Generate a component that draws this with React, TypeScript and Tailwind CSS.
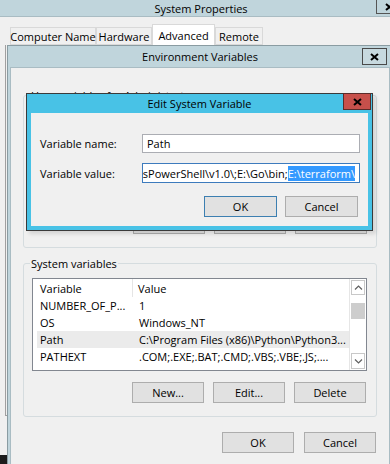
import type { ReactNode } from "react";

type EnvRow = { name: string; value: string; active?: boolean };

const SYSTEM_ROWS: EnvRow[] = [
  { name: "NUMBER_OF_P...", value: "1" },
  { name: "OS", value: "Windows_NT" },
  { name: "Path", value: "C:\\Program Files (x86)\\Python\\Python3...", active: true },
  { name: "PATHEXT", value: ".COM;.EXE;.BAT;.CMD;.VBS;.VBE;.JS;...." },
];

const TABS = [
  { label: "Computer Name", width: "w-[86px]" },
  { label: "Hardware", width: "w-[56px]" },
  { label: "Advanced", width: "w-[63px]", selected: true },
  { label: "Remote", width: "w-[48px]" },
];

function CloseGlyph() {
  return (
    <svg width="9" height="8" viewBox="0 0 9 8" className="text-black">
      <path d="M1 1l7 6M8 1L1 7" stroke="currentColor" strokeWidth="2" fill="none" />
    </svg>
  );
}

function Chevron({ down = false }: { down?: boolean }) {
  return (
    <svg width="9" height="6" viewBox="0 0 9 6">
      <path d={down ? "M1 1.5l3.5 3.5L8 1.5" : "M1 4.5L4.5 1 8 4.5"} stroke="#606060" strokeWidth="1.2" fill="none" />
    </svg>
  );
}

function WinButton({ children, isDefault = false, wide = false }: { children: ReactNode; isDefault?: boolean; wide?: boolean }) {
  return (
    <div
      className={`flex h-[21px] items-center justify-center border bg-[#e1e1e1] ${wide ? "w-[73px]" : "w-[72px]"} ${
        isDefault ? "border-[#3c7fb1]" : "border-[#adadad]"
      }`}
    >
      {children}
    </div>
  );
}

function ListView({ rows }: { rows: EnvRow[] }) {
  return (
    <div className="flex h-[93px] border border-[#828790] bg-white">
      <div className="min-w-0 flex-1 overflow-hidden">
        <div className="flex h-[18px] items-center">
          <div className="flex h-full w-[100px] items-center border-r border-[#e5e5e5] pl-[7px]">Variable</div>
          <div className="pl-[5px]">Value</div>
        </div>
        {rows.map((r) => (
          <div key={r.name} className={`ml-[4px] flex h-[17px] items-center ${r.active ? "bg-[#ebebeb]" : ""}`}>
            <div className="w-[96px] pl-[3px]">{r.name}</div>
            <div className="pl-[6px]">{r.value}</div>
          </div>
        ))}
      </div>
      <div className="flex w-[17px] flex-col border-l border-[#e6e6e6] bg-white p-[1px]">
        <div className="flex h-[15px] shrink-0 items-center justify-center border border-[#c8c8c8]">
          <Chevron />
        </div>
        <div className="mt-[8px] h-[16px] shrink-0 bg-[#cdcdcd]" />
        <div className="flex-1" />
        <div className="flex h-[16px] shrink-0 items-center justify-center border border-[#c8c8c8]">
          <Chevron down />
        </div>
      </div>
    </div>
  );
}

export default function App() {
  return (
    <div className="relative h-[464px] w-[390px] overflow-hidden whitespace-nowrap bg-[#f0f0f0] font-['Open_Sans',sans-serif] text-[11px] leading-[15px] text-black">
      {/* System Properties (inactive, behind) */}
      <div className="relative flex h-[17px] items-center justify-center border-b border-[#a9bcc3] bg-[#c0d5dc]">
        <span className="pl-[12px]">System Properties</span>
        <div className="absolute right-[-13px] top-[-1px] flex h-[15px] w-[27px] items-center justify-center border border-[#555] bg-[#c0d5dc]">
          <CloseGlyph />
        </div>
      </div>
      <div className="flex h-[28px] items-end pl-[10px]">
        {TABS.map((t) =>
          t.selected ? (
            <div key={t.label} className={`flex h-[21px] ${t.width} items-start justify-center border border-b-0 border-[#d9d9d9] bg-white pt-[3px]`}>
              {t.label}
            </div>
          ) : (
            <div key={t.label} className={`flex h-[18px] ${t.width} items-center justify-center border border-[#d9d9d9] bg-[#f0f0f0]`}>
              {t.label}
            </div>
          )
        )}
      </div>
      <div className="ml-[5px] h-[371px] w-[10px] border-b border-l border-[#a0a0a0]" />

      {/* Environment Variables */}
      <div className="absolute left-[7px] top-[45px] flex h-[440px] w-[386px] flex-col border border-[#8a9ca2] bg-[#c0d5dc] px-[2px]">
        <div className="relative flex h-[21px] shrink-0 items-center justify-center">
          <span>Environment Variables</span>
          <div className="absolute right-[3px] top-[2px] flex h-[17px] w-[25px] items-center justify-center border border-[#4a4a4a] bg-[#c7d9df]">
            <CloseGlyph />
          </div>
        </div>
        <div className="flex flex-1 flex-col border border-[#a9bcc3] bg-[#f0f0f0] px-[12px]">
          <fieldset className="mt-[20px] rounded-[3px] border border-[#d5dcdf] px-[8px] pb-[13px]">
            <legend className="ml-[-2px] px-[1px]">User variables for Administrator</legend>
            <div className="mt-[6px] h-[93px] border border-[#828790] bg-white" />
            <div className="mt-[11px] flex justify-end gap-[9px] pr-[1px]">
              <WinButton>New...</WinButton>
              <WinButton>Edit...</WinButton>
              <WinButton>Delete</WinButton>
            </div>
          </fieldset>
          <fieldset className="mt-[8px] rounded-[3px] border border-[#d5dcdf] pl-[8px] pr-[9px] pb-[13px]">
            <legend className="ml-[-2px] px-[1px]">System variables</legend>
            <div className="mt-[7px]">
              <ListView rows={SYSTEM_ROWS} />
            </div>
            <div className="mt-[11px] flex justify-end gap-[9px] pr-[1px]">
              <WinButton>New...</WinButton>
              <WinButton>Edit...</WinButton>
              <WinButton>Delete</WinButton>
            </div>
          </fieldset>
          <div className="mt-[15px] flex justify-end gap-[10px] pr-[1px]">
            <WinButton>OK</WinButton>
            <WinButton>Cancel</WinButton>
          </div>
        </div>
      </div>

      {/* Edit System Variable (active dialog) */}
      <div className="absolute left-[26px] top-[93px] flex h-[138px] w-[347px] flex-col border border-[#3a3a3a] bg-[#48c2e6] px-[4px] pb-[4px] shadow-[3px_3px_4px_rgba(0,0,0,0.12)]">
        <div className="relative flex h-[19px] shrink-0 items-center justify-center">
          <span>Edit System Variable</span>
          <div className="absolute right-[-3px] top-[-1px] flex h-[17px] w-[28px] items-center justify-center border border-[#5a2c2a] bg-[#c7504b]">
            <CloseGlyph />
          </div>
        </div>
        <div className="flex flex-1 flex-col bg-[#f0f0f0] pl-[9px] pr-[8px] pt-[21px]">
          <div className="flex h-[19px] items-center">
            <div className="w-[102px]">Variable name:</div>
            <div className="flex h-full flex-1 items-center border border-[#abadb3] bg-white pl-[4px]">Path</div>
          </div>
          <div className="mt-[10px] flex h-[20px] items-center">
            <div className="w-[102px]">Variable value:</div>
            <div className="flex h-full min-w-0 flex-1 items-center justify-end overflow-hidden border border-[#3d7bbd] bg-white pr-[4px]">
              <span>sPowerShell\v1.0\;E:\Go\bin;</span>
              <span className="bg-[#3399ff] text-white">E:\terraform\</span>
            </div>
          </div>
          <div className="mt-[13px] flex justify-end gap-[8px] pr-[2px]">
            <WinButton isDefault wide>
              OK
            </WinButton>
            <WinButton wide>Cancel</WinButton>
          </div>
        </div>
      </div>

      {/* taskbar corner peeking in */}
      <div className="absolute bottom-0 left-0 h-[9px] w-[7px] bg-[#1c1c1c]" />
    </div>
  );
}
